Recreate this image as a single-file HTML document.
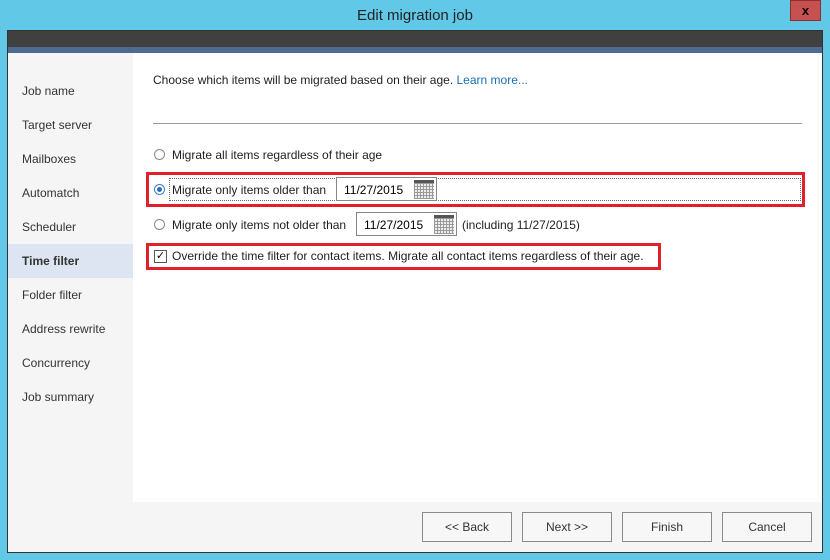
<!DOCTYPE html><html><head><style>
body{margin:0;width:830px;height:560px;background:#62c8e8;font-family:"Liberation Sans",sans-serif;position:relative;overflow:hidden}
.a{position:absolute}
.t{font-size:12px;color:#1e1e1e;white-space:nowrap}
.side div{position:absolute;left:14px;font-size:12px;color:#333}
.btn{position:absolute;top:512px;width:88px;height:28px;border:1px solid #8a8a8a;background:#f7f7f7;font-size:12px;color:#333;text-align:center;line-height:28px}
.dt{position:absolute;height:24px;border:1px solid #888;background:#fff;font-size:12px;line-height:24px;box-sizing:border-box;padding-left:7px}
.cal{position:absolute;right:2px;top:2px;width:20px;height:19px;background:repeating-linear-gradient(90deg,#999 0 1px,transparent 1px 3px),repeating-linear-gradient(0deg,#999 0 1px,#eee 1px 3px);border-top:3px solid #555;box-sizing:border-box}
.radio{position:absolute;width:11px;height:11px;border:1px solid #888;border-radius:50%;background:#fff;box-sizing:border-box}
</style></head><body>
<div class="a" style="left:0;top:0;width:830px;height:30px;text-align:center;line-height:31px;font-size:15px;color:#222">Edit migration job</div>
<div class="a" style="left:790px;top:0;width:31px;height:21px;background:#c75050;border:1px solid #8a3030;box-sizing:border-box;color:#000;font-weight:bold;font-size:13px;text-align:center;line-height:19px">x</div>
<div class="a" style="left:7px;top:30px;width:816px;height:523px;background:#333"></div>
<div class="a" style="left:8px;top:31px;width:814px;height:16px;background:#404040"></div>
<div class="a" style="left:8px;top:47px;width:814px;height:6px;background:#4d6a90"></div>
<div class="a" style="left:8px;top:53px;width:814px;height:449px;background:#fff"></div>
<div class="a" style="left:8px;top:502px;width:814px;height:50px;background:#f5f5f5"></div>
<div class="a side" style="left:8px;top:53px;width:125px;height:449px;background:#f5f5f5">
<div style="left:0;top:191px;width:125px;height:34px;background:#dde5f2"></div>
<div style="top:31px">Job name</div><div style="top:65px">Target server</div><div style="top:99px">Mailboxes</div><div style="top:133px">Automatch</div><div style="top:167px">Scheduler</div><div style="top:201px;font-weight:bold;color:#333">Time filter</div><div style="top:235px">Folder filter</div><div style="top:269px">Address rewrite</div><div style="top:303px">Concurrency</div><div style="top:337px">Job summary</div>
</div>
<div class="a t" style="left:153px;top:73px">Choose which items will be migrated based on their age. <span style="color:#1a6fb5">Learn more...</span></div>
<div class="a" style="left:153px;top:123px;width:649px;height:1px;background:#999"></div>
<div class="radio" style="left:154px;top:149px"></div><div class="a t" style="left:172px;top:148px">Migrate all items regardless of their age</div>
<div class="a" style="left:146px;top:172px;width:659px;height:35px;border:3px solid #e0202a;box-sizing:border-box"></div>
<div class="a" style="left:169px;top:178px;width:632px;height:23px;border:1px dotted #666;box-sizing:border-box"></div>
<div class="radio" style="left:154px;top:184px;border-color:#3c7fc0"><div class="a" style="left:2px;top:2px;width:5px;height:5px;border-radius:50%;background:#2a6db8"></div></div>
<div class="a t" style="left:172px;top:183px">Migrate only items older than</div>
<div class="dt" style="left:336px;top:177px;width:101px">11/27/2015<div class="cal"></div></div>
<div class="radio" style="left:154px;top:219px"></div><div class="a t" style="left:172px;top:218px">Migrate only items not older than</div>
<div class="dt" style="left:356px;top:212px;width:101px">11/27/2015<div class="cal"></div></div>
<div class="a t" style="left:462px;top:218px">(including 11/27/2015)</div>
<div class="a" style="left:146px;top:243px;width:515px;height:27px;border:3px solid #e0202a;box-sizing:border-box"></div>
<div class="a" style="left:154px;top:250px;width:13px;height:13px;border:1px solid #555;box-sizing:border-box;background:#fff;font-size:11px;line-height:11px;text-align:center">✓</div>
<div class="a t" style="left:172px;top:249px">Override the time filter for contact items. Migrate all contact items regardless of their age.</div>
<div class="btn" style="left:422px">&lt;&lt; Back</div><div class="btn" style="left:522px">Next &gt;&gt;</div><div class="btn" style="left:622px">Finish</div><div class="btn" style="left:722px">Cancel</div>
</body></html>
